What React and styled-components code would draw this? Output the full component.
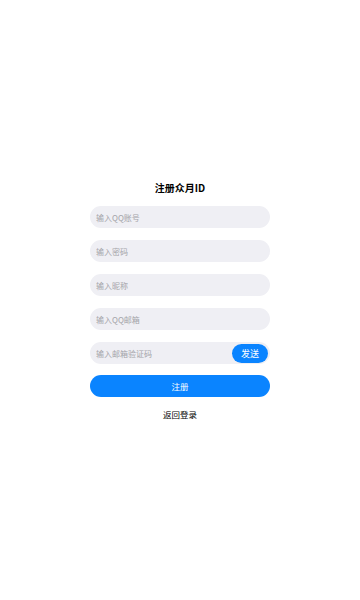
import React from "react";
import styled, { createGlobalStyle } from "styled-components";

const GlobalStyle = createGlobalStyle`
  html, body {
    margin: 0;
    padding: 0;
    background: #ffffff;
  }
  * {
    box-sizing: border-box;
  }
  body {
    font-family: "Noto Sans CJK SC", "Noto Sans", sans-serif;
  }
`;

const Page = styled.div`
  width: 360px;
  min-height: 600px;
  padding-top: 181px;
  display: flex;
  justify-content: center;
`;

const Form = styled.form`
  width: 180px;
  display: flex;
  flex-direction: column;
  align-items: stretch;
`;

const Title = styled.h1`
  margin: 0 0 11px 0;
  font-size: 10px;
  line-height: 14px;
  font-weight: 700;
  color: #000000;
  text-align: center;
`;

const Fields = styled.div`
  display: flex;
  flex-direction: column;
  gap: 12px;
`;

const Field = styled.div`
  height: 22px;
  border-radius: 11px;
  background: #efeff4;
  display: flex;
  align-items: center;
  padding: 0 2px 0 6px;
`;

const Input = styled.input`
  flex: 1;
  min-width: 0;
  border: none;
  outline: none;
  background: transparent;
  padding: 0;
  font-family: inherit;
  font-size: 8px;
  color: #000;

  &::placeholder {
    color: #a4a4a9;
  }
`;

const SendButton = styled.button`
  width: 36px;
  height: 19px;
  border: none;
  border-radius: 10px;
  background: #0a84ff;
  color: #ffffff;
  font-family: inherit;
  font-size: 9px;
  padding: 0;
  cursor: pointer;
`;

const SubmitButton = styled.button`
  margin-top: 11px;
  height: 22px;
  border: none;
  border-radius: 11px;
  background: #0a84ff;
  color: #ffffff;
  font-family: inherit;
  font-size: 8.5px;
  padding: 0;
  cursor: pointer;
`;

const BackLink = styled.a`
  margin-top: 11px;
  font-size: 8.5px;
  line-height: 12px;
  color: #000000;
  text-align: center;
  text-decoration: none;
  cursor: pointer;
`;

const fields = [
  { placeholder: "输入QQ账号", type: "text" },
  { placeholder: "输入密码", type: "password" },
  { placeholder: "输入昵称", type: "text" },
  { placeholder: "输入QQ邮箱", type: "email" },
];

export default function App() {
  return (
    <>
      <GlobalStyle />
      <Page>
        <Form onSubmit={(e) => e.preventDefault()}>
          <Title>注册众月ID</Title>
          <Fields>
            {fields.map((f) => (
              <Field key={f.placeholder}>
                <Input type={f.type} placeholder={f.placeholder} />
              </Field>
            ))}
            <Field>
              <Input type="text" placeholder="输入邮箱验证码" />
              <SendButton type="button">发送</SendButton>
            </Field>
          </Fields>
          <SubmitButton type="submit">注册</SubmitButton>
          <BackLink>返回登录</BackLink>
        </Form>
      </Page>
    </>
  );
}
